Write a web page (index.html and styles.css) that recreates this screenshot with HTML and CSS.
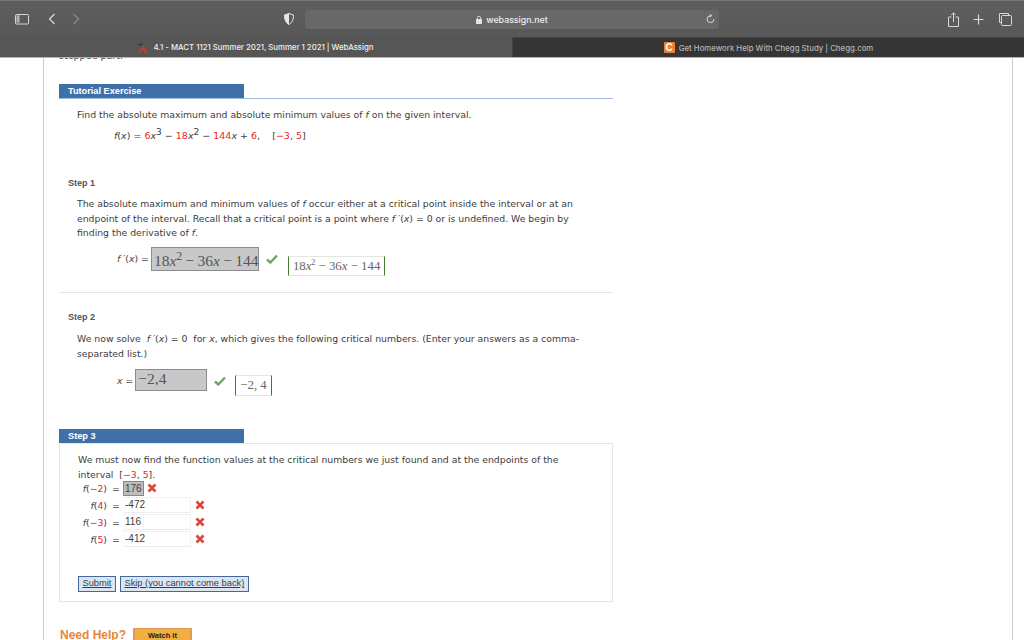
FILE: index.html
```html
<!DOCTYPE html>
<html lang="en">
<head>
    <meta charset="UTF-8">
    <title>4.1 - MACT 1121 Summer 2021, Summer 1 2021 | WebAssign</title>
    <link rel="stylesheet" href="styles.css">
</head>
<body>
    <div class="browser">
        <div class="toolbar">
            <svg class="tool-icon sidebar-icon" width="14" height="11" viewBox="0 0 14 11"><rect x="0.5" y="0.5" width="13" height="9.5" rx="1" fill="none" stroke="#d8d8d8"/><rect x="1" y="1" width="4" height="8.5" fill="#8a8a8a"/><path d="M2 3h2M2 5h2M2 7h2" stroke="#e8e8e8" stroke-width="0.8"/></svg>
            <svg class="tool-icon back-icon" width="8" height="12" viewBox="0 0 8 12"><path d="M6.5 1 1.5 6l5 5" fill="none" stroke="#dcdcdc" stroke-width="1.2"/></svg>
            <svg class="tool-icon forward-icon" width="8" height="12" viewBox="0 0 8 12"><path d="M1.5 1l5 5-5 5" fill="none" stroke="#8c8c8c" stroke-width="1.2"/></svg>
            <svg class="tool-icon shield-icon" width="10" height="12" viewBox="0 0 10 12"><path d="M5 .5 9.500 2c0 4.500-1 7.500-4.500 9.500C1.500 9.500.5 6.500.5 2z" fill="none" stroke="#e6e6e6"/><path d="M5 .5.500 2c0 4.500 1 7.500 4.500 9.500z" fill="#e6e6e6"/></svg>
            <div class="address-bar">
                <span class="address"><svg class="lock" width="6" height="8" viewBox="0 0 6 8"><rect y="3" width="6" height="5" rx="0.8" fill="#e6e6e6"/><path d="M1.300 3.500V2a1.700 1.700 0 0 1 3.400 0v1.500" fill="none" stroke="#e6e6e6" stroke-width="0.8"/></svg>webassign.net</span>
                <svg class="reload" width="9" height="10" viewBox="0 0 9 10"><path d="M4.500 1.800a3.400 3.400 0 1 0 3.400 3.400" fill="none" stroke="#d8d8d8"/><path d="M3.800 0l2.400 1.800-2.400 1.800z" fill="#d8d8d8"/></svg>
            </div>
            <svg class="tool-icon share-icon" width="11" height="15" viewBox="0 0 11 15"><path d="M3.500 5H.5v9.500h10V5h-3M5.500 1v9M3.300 3l2.200-2.200L7.700 3" fill="none" stroke="#d8d8d8"/></svg>
            <svg class="tool-icon plus-icon" width="11" height="11" viewBox="0 0 11 11"><path d="M5.500.5v10M.5 5.500h10" stroke="#d8d8d8" stroke-width="1.200"/></svg>
            <svg class="tool-icon tabs-icon" width="13" height="13" viewBox="0 0 13 13"><path d="M2.500 9.500H.5V.5h9v2" fill="none" stroke="#d8d8d8"/><rect x="2.500" y="2.500" width="10" height="10" rx="1" fill="none" stroke="#d8d8d8"/></svg>
        </div>
        <div class="tabbar">
            <div class="tab tab-active">
                <svg class="favicon" width="11" height="11" viewBox="0 0 11 11"><path d="M1 1l3 2-2 1zM4 0l2 3-2 0z" fill="#333"/><path d="M6.500 3 10 10.500H7.500L6 7 3.500 10.500H1.500z" fill="#d23a2e"/></svg>
                <span>4.1 - MACT 1121 Summer 2021, Summer 1 2021 | WebAssign</span>
            </div>
            <div class="tab tab-other">
                <span class="chegg-icon">C</span>
                <span>Get Homework Help With Chegg Study | Chegg.com</span>
            </div>
        </div>
    </div>

    <div class="page">
        <div class="sheet">
            <p class="cut-text">stepped part.</p>

            <div class="heading-row heading-row-first"><h2 class="section-title">Tutorial Exercise</h2></div>
            <div class="question">
                <p class="text">Find the absolute maximum and absolute minimum values of <i>f</i> on the given interval.</p>
                <p class="formula"><i>f</i>(<i>x</i>) = <span class="red">6</span><i>x</i><sup>3</sup> &minus; <span class="red">18</span><i>x</i><sup>2</sup> &minus; <span class="red">144</span><i>x</i> + <span class="red">6</span>, &nbsp; &nbsp;[<span class="red">&minus;3</span>, <span class="red">5</span>]</p>
            </div>

            <section class="step step-one">
                <h3 class="step-title">Step 1</h3>
                <p class="text">The absolute maximum and minimum values of <i>f</i> occur either at a critical point inside the interval or at an endpoint of the interval. Recall that a critical point is a point where <i>f</i> &prime;(<i>x</i>) = 0 or is undefined. We begin by finding the derivative of <i>f</i>.</p>
                <div class="answer-row answer-row-one">
                    <span class="label"><i>f</i> &prime;(<i>x</i>) =</span>
                    <span class="math-input math-input-wide">18<i>x</i><sup>2</sup> &minus; 36<i>x</i> &minus; 144</span>
                    <svg class="check" width="12" height="10" viewBox="0 0 12 10"><path d="M1 5.500 4.300 8.500 11 1.500" fill="none" stroke="#6aa860" stroke-width="2.400"/></svg>
                    <span class="math-key">18<i>x</i><sup>2</sup> &minus; 36<i>x</i> &minus; 144</span>
                </div>
            </section>

            <section class="step step-two">
                <h3 class="step-title">Step 2</h3>
                <p class="text">We now solve &nbsp;<i>f</i> &prime;(<i>x</i>) = 0 &nbsp;for <i>x</i>, which gives the following critical numbers. (Enter your answers as a comma-separated list.)</p>
                <div class="answer-row answer-row-two">
                    <span class="label"><i>x</i> =</span>
                    <span class="math-input math-input-list">&minus;2,4</span>
                    <svg class="check" width="12" height="10" viewBox="0 0 12 10"><path d="M1 5.500 4.300 8.500 11 1.500" fill="none" stroke="#6aa860" stroke-width="2.400"/></svg>
                    <span class="math-key">&minus;2, 4</span>
                </div>
            </section>

            <div class="heading-row heading-row-step"><h2 class="section-title">Step 3</h2></div>
            <div class="active-step">
                <p class="text">We must now find the function values at the critical numbers we just found and at the endpoints of the interval &nbsp;[<span class="red">&minus;3</span>, <span class="red">5</span>].</p>
                <div class="value-grid">
                    <span class="value-label"><i>f</i>(<span class="red">&minus;2</span>)</span><span class="equals">=</span>
                    <span class="value-cell"><span class="value-active">176</span><svg class="cross cross-near" width="10" height="10" viewBox="0 0 10 10"><path d="M1.500 1.500l7 7M8.500 1.500l-7 7" stroke="#d9453c" stroke-width="2.600"/></svg></span>
                    <span class="value-label"><i>f</i>(<span class="red">4</span>)</span><span class="equals">=</span>
                    <span class="value-cell"><span class="value-box">-472</span><svg class="cross" width="10" height="10" viewBox="0 0 10 10"><path d="M1.500 1.500l7 7M8.500 1.500l-7 7" stroke="#d9453c" stroke-width="2.600"/></svg></span>
                    <span class="value-label"><i>f</i>(<span class="red">&minus;3</span>)</span><span class="equals">=</span>
                    <span class="value-cell"><span class="value-box">116</span><svg class="cross" width="10" height="10" viewBox="0 0 10 10"><path d="M1.500 1.500l7 7M8.500 1.500l-7 7" stroke="#d9453c" stroke-width="2.600"/></svg></span>
                    <span class="value-label"><i>f</i>(<span class="red">5</span>)</span><span class="equals">=</span>
                    <span class="value-cell"><span class="value-box">-412</span><svg class="cross" width="10" height="10" viewBox="0 0 10 10"><path d="M1.500 1.500l7 7M8.500 1.500l-7 7" stroke="#d9453c" stroke-width="2.600"/></svg></span>
                </div>
                <div class="buttons">
                    <button class="step-button">Submit</button>
                    <button class="step-button">Skip (you cannot come back)</button>
                </div>
            </div>

            <div class="help-row">
                <span class="need-help">Need Help?</span>
                <button class="watch-button">Watch It</button>
            </div>
        </div>
    </div>
</body>
</html>
```

FILE: styles.css
```css
* {
    margin: 0;
    padding: 0;
    box-sizing: border-box;
}

html, body {
    height: 640px;
    overflow: hidden;
}

body {
    font-family: "DejaVu Sans", Verdana, sans-serif;
    background: #fff;
    color: #333;
}

/* browser chrome */
.browser {
    height: 58px;
    background: #565656;
    border-bottom: 1px solid #b4b4b4;
}

.toolbar {
    height: 37px;
    display: flex;
    align-items: center;
    padding-left: 15px;
    background: linear-gradient(#5e5e5e, #585858);
    border-top: 1px solid #777;
}

.tool-icon {
    flex: none;
}

.back-icon {
    margin-left: 19px;
}

.forward-icon {
    margin-left: 16px;
}

.shield-icon {
    margin-left: 204px;
}

.address-bar {
    width: 414px;
    height: 19px;
    margin-left: 11px;
    display: flex;
    align-items: center;
    position: relative;
    background: #686868;
    border-radius: 3px;
}

.address {
    width: 100%;
    text-align: center;
    font-family: Inter, sans-serif;
    font-size: 8.8px;
    font-weight: 500;
    color: #eee;
}

.lock {
    margin-right: 4px;
    vertical-align: -1px;
}

.reload {
    position: absolute;
    right: 4px;
    top: 4px;
}

.share-icon {
    margin-left: 229px;
}

.plus-icon {
    margin-left: 14px;
}

.tabs-icon {
    margin-left: 15px;
}

.tabbar {
    height: 20px;
    display: flex;
}

.tab {
    width: 50%;
    display: flex;
    align-items: center;
    justify-content: center;
    gap: 4px;
    font-family: Inter, sans-serif;
    font-size: 7.8px;
    font-weight: 500;
}

.tab-active {
    background: #565656;
    color: #f0f0f0;
    padding-right: 1px;
    gap: 5px;
}

.tab-other {
    background: #353535;
    color: #b4b4b4;
    border-left: 1px solid #444;
    border-top: 1px solid #444;
}

.chegg-icon {
    width: 11px;
    height: 11px;
    background: #e8822f;
    border-radius: 1px;
    color: #fff;
    font-family: "Liberation Sans", sans-serif;
    font-size: 10px;
    font-weight: bold;
    line-height: 11px;
    text-align: center;
}

/* page */
.page {
    height: 582px;
    overflow: hidden;
}

.sheet {
    width: 970px;
    height: 640px;
    margin: -8px 0 0 43px;
    padding: 0 0 0 15px;
    border-left: 1px solid #ccc;
    border-right: 1px solid #ccc;
}

.cut-text {
    height: 11px;
    font-size: 9.5px;
    line-height: 11px;
    color: #444;
}

.heading-row {
    width: 554px;
    border-bottom: 1px solid #9bbbdc;
}

.heading-row-first {
    margin-top: 23px;
}

.section-title {
    width: 185px;
    height: 14px;
    padding-left: 9px;
    background: #3f71a8;
    color: #fff;
    font-family: "Liberation Sans", sans-serif;
    font-size: 9.2px;
    font-weight: bold;
    line-height: 14px;
}

.text {
    width: 510px;
    font-size: 9.3px;
    line-height: 14.3px;
    color: #3c3c3c;
}

.red {
    color: #e8251f;
}

.question {
    padding: 9px 0 0 18px;
}

.formula {
    margin: 7px 0 0 37px;
    font-size: 9.5px;
    line-height: 14px;
    color: #3c3c3c;
}

.formula sup {
    font-size: 9px;
    line-height: 0;
}

.step {
    width: 554px;
}

.step .text {
    margin-left: 18px;
}

.step-title {
    margin-left: 9px;
    font-family: "Liberation Sans", sans-serif;
    font-size: 9px;
    font-weight: bold;
    line-height: 12px;
    color: #555;
}

.step-one {
    margin-top: 34px;
    height: 116px;
    border-bottom: 1px solid #e6e6e6;
}

.step-one .text {
    margin-top: 8px;
}

.step-two {
    margin-top: 18px;
    height: 118px;
}

.step-two .text {
    margin-top: 9px;
}

.answer-row {
    display: flex;
    align-items: flex-start;
}

.answer-row-one {
    margin: 7px 0 0 58px;
}

.answer-row-two {
    margin: 8px 0 0 58px;
}

.label {
    font-size: 9.3px;
    line-height: 24px;
    color: #444;
    margin-right: 2px;
}

.math-input {
    background: #c8c8c8;
    border: 1px solid #8c8c8c;
    color: #555;
    font-family: "Liberation Serif", serif;
    font-size: 15.5px;
    white-space: nowrap;
}

.math-input sup {
    font-size: 12px;
    line-height: 0;
}

.math-input-wide {
    height: 24px;
    width: 108px;
    padding-left: 2px;
    line-height: 26px;
    word-spacing: -0.6px;
}

.math-input-list {
    height: 22px;
    width: 72px;
    padding-left: 2px;
    line-height: 18px;
}

.check {
    margin: 7px 0 0 7px;
}

.math-key {
    margin-left: 10px;
    border: 1px solid #e2e8e0;
    border-left: 1px solid #3f7f2f;
    border-right: 1px solid #3f7f2f;
    color: #666;
    font-family: "Liberation Serif", serif;
    font-size: 12.8px;
    white-space: nowrap;
    padding: 0 4px;
}

.math-key sup {
    font-size: 8px;
    line-height: 0;
}

.answer-row-one .math-key {
    width: 97px;
    height: 20px;
    line-height: 18px;
    margin-top: 9px;
}

.answer-row-two .math-key {
    width: 37px;
    height: 21px;
    line-height: 19px;
    margin-top: 6px;
    margin-left: 9px;
}

.heading-row-step {
    border-bottom-color: #dfe8f2;
}

.active-step {
    width: 554px;
    height: 158px;
    padding: 9px 0 0 18px;
    border: 1px solid #e0e6ec;
    border-top: 0;
}

.value-grid {
    display: grid;
    grid-template-columns: 34px 16px auto;
    align-items: center;
    margin: -2px 0 0 -4px;
    font-size: 9.3px;
    color: #3c3c3c;
}

.value-label {
    text-align: right;
    line-height: 17px;
    margin-right: 1px;
}

.equals {
    text-align: center;
}

.value-cell {
    display: flex;
    align-items: center;
    height: 17px;
    margin-left: -1px;
}

.value-active {
    background: #bdbdbd;
    border: 1px solid #888;
    height: 15px;
    line-height: 13px;
    padding: 0 1px;
    font-family: "Liberation Sans", sans-serif;
    font-size: 10px;
}

.value-box {
    width: 68px;
    height: 16px;
    line-height: 14px;
    padding-left: 2px;
    border-right: 1px solid #f2f2f2;
    border-bottom: 1px solid #ececec;
    border-top: 1px solid #f2f2f2;
    font-family: "Liberation Sans", sans-serif;
    font-size: 10px;
}

.cross {
    margin-left: 4px;
}

.cross-near {
    margin-left: 3px;
}

.buttons {
    margin: 28px 0 0 0;
    display: flex;
    gap: 4px;
}

.step-button {
    height: 16px;
    padding: 0 3.5px;
    background: #dde6f0;
    border: 1px solid #42699a;
    color: #2f3f55;
    font-family: "Liberation Sans", sans-serif;
    font-size: 9.3px;
    line-height: 13px;
    text-decoration: underline;
}

.help-row {
    display: flex;
    align-items: center;
    margin: 26px 0 0 1px;
    gap: 7px;
}

.need-help {
    font-family: "Liberation Sans", sans-serif;
    font-size: 12px;
    font-weight: bold;
    color: #e8853a;
}

.watch-button {
    width: 59px;
    height: 14px;
    background: #f0b040;
    border: 1px solid #e09a58;
    border-left-width: 2px;
    border-right-width: 2px;
    color: #222;
    font-family: "Liberation Sans", sans-serif;
    font-size: 7.5px;
    font-weight: bold;
}
```
